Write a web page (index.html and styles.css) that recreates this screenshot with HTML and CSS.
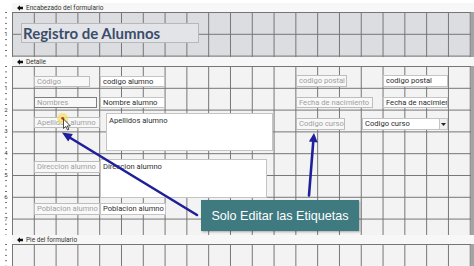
FILE: index.html
```html
<!DOCTYPE html>
<html lang="es">
<head>
<meta charset="utf-8">
<title>Registro de Alumnos - Vista Diseño</title>
<link rel="stylesheet" href="styles.css">
</head>
<body>
<div class="screen">
  <div class="topstrip"></div>

  <div class="bar-row">
    <div class="ruler ruler-plain"></div>
    <div class="bar">
      <svg class="bar-icon" width="6" height="6" viewBox="0 0 6 6"><polygon points="0,3 3,0.3 3,1.7 6,1.7 6,4.3 3,4.3 3,5.7" fill="#111"/></svg>
      <span>Encabezado del formulario</span>
    </div>
  </div>
  <div class="section sec-header">
    <div class="ruler">
      <div class="cm"><span>1</span></div>
    </div>
    <div class="grid grid-dark">
      <div class="title">Registro de Alumnos</div>
    </div>
    <div class="beyond"></div>
  </div>

  <div class="bar-row">
    <div class="ruler ruler-plain"></div>
    <div class="bar">
      <svg class="bar-icon" width="6" height="6" viewBox="0 0 6 6"><polygon points="0,3 3,0.3 3,1.7 6,1.7 6,4.3 3,4.3 3,5.7" fill="#111"/></svg>
      <span>Detalle</span>
    </div>
  </div>
  <div class="section sec-detail">
    <div class="ruler">
      <div class="cm"><span>1</span></div>
      <div class="cm"><span>2</span></div>
      <div class="cm"><span>3</span></div>
      <div class="cm"><span>4</span></div>
      <div class="cm"><span>5</span></div>
      <div class="cm"><span>6</span></div>
      <div class="cm"><span>7</span></div>
    </div>
    <div class="grid">
      <div class="ctl lbl l-codigo">Código</div>
      <div class="ctl txt t-codigo">codigo alumno</div>
      <div class="ctl lbl sel l-nombres">Nombres</div>
      <div class="ctl txt t-nombre">Nombre alumno</div>
      <div class="ctl lbl l-apellidos">Apellidos alumno</div>
      <div class="ctl txt multi t-apellidos">Apellidos alumno</div>
      <div class="ctl lbl l-direccion">Direccion alumno</div>
      <div class="ctl txt multi t-direccion">Direccion alumno</div>
      <div class="ctl lbl l-poblacion">Poblacion alumno</div>
      <div class="ctl txt t-poblacion">Poblacion alumno</div>
      <div class="ctl lbl l-postal">codigo postal</div>
      <div class="ctl txt t-postal">codigo postal</div>
      <div class="ctl lbl l-fecha">Fecha de nacimiento</div>
      <div class="ctl txt t-fecha">Fecha de nacimier</div>
      <div class="ctl lbl l-curso">Codigo curso</div>
      <div class="ctl txt combo t-curso">
        <span class="combo-text">Codigo curso</span>
        <span class="combo-btn"><svg width="5" height="3" viewBox="0 0 5 3"><polygon points="0,0 5,0 2.5,3" fill="#222"/></svg></span>
      </div>
      <div class="callout">Solo Editar las Etiquetas</div>
    </div>
    <div class="beyond"></div>
  </div>

  <div class="bar-row">
    <div class="ruler ruler-plain"></div>
    <div class="bar">
      <svg class="bar-icon" width="6" height="6" viewBox="0 0 6 6"><polygon points="0,3 3,0.3 3,1.7 6,1.7 6,4.3 3,4.3 3,5.7" fill="#111"/></svg>
      <span>Pie del formulario</span>
    </div>
  </div>
  <div class="section sec-footer">
    <div class="ruler"></div>
    <div class="grid"></div>
    <div class="beyond"></div>
  </div>
</div>

<svg class="overlay" width="474" height="266" viewBox="0 0 474 266">
  <line x1="197" y1="215" x2="68" y2="136.5" stroke="#1f1f9c" stroke-width="2.6" stroke-linecap="round"/>
  <polygon points="62,132.5 72.9,133.9 68.2,141.5" fill="#1f1f9c"/>
  <line x1="309" y1="195.5" x2="313.3" y2="141" stroke="#1f1f9c" stroke-width="2.6" stroke-linecap="round"/>
  <polygon points="314,133 317.7,142.4 308.9,141.6" fill="#1f1f9c"/>
  <circle cx="62.7" cy="118.3" r="5.5" fill="#f3e36a" opacity="0.75"/>
  <circle cx="62.7" cy="118.3" r="1.4" fill="#d0302a"/>
  <path transform="translate(63.5,119)" d="M0 0 L0 9.5 L2.3 7.4 L4 11 L5.4 10.3 L3.8 6.9 L6.8 6.9 Z" fill="#fff" stroke="#222" stroke-width="0.8" stroke-linejoin="round"/>
</svg>
</body>
</html>
```

FILE: styles.css
```css
* { box-sizing: border-box; }

body {
  margin: 0;
  width: 474px;
  height: 266px;
  overflow: hidden;
  background: #fff;
  font-family: Roboto, "Open Sans", sans-serif;
  position: relative;
}

.screen {
  display: flex;
  flex-direction: column;
  width: 474px;
  height: 266px;
}

.topstrip {
  height: 3px;
  flex: none;
  background: #fff;
}

.bar-row {
  display: flex;
  height: 9px;
  flex: none;
}

.ruler {
  width: 12px;
  flex: none;
  background-color: #fff;
  background-image: linear-gradient(to bottom, #6a6a6a 1px, transparent 1px);
  background-size: 2px 5.45px;
  background-repeat: repeat-y;
  background-position: 5px 0;
  display: flex;
  flex-direction: column;
}

.ruler-plain {
  background-image: none;
}

.cm {
  height: 21.8px;
  flex: none;
  display: flex;
  align-items: flex-end;
  justify-content: center;
}

.cm span {
  font-size: 6px;
  line-height: 6px;
  margin-bottom: -3px;
  padding: 0 1px;
  background: #fff;
  color: #333;
  position: relative;
  z-index: 1;
}

.bar {
  flex: 1;
  background: #f7f7f7;
  display: flex;
  align-items: center;
  gap: 3px;
  padding-left: 5px;
  font-size: 6.5px;
  color: #333;
  white-space: nowrap;
}

.bar-icon {
  flex: none;
}

.section {
  display: flex;
  flex: none;
}

.sec-header { height: 45px; }
.sec-detail { height: 169px; }
.sec-footer { height: 22px; }

.grid {
  width: 459px;
  flex: none;
  position: relative;
  background-color: #f3f3f3;
  background-image:
    linear-gradient(to right, #757575 1px, transparent 1px),
    linear-gradient(to bottom, #757575 1px, transparent 1px);
  background-size: 21.8px 21.8px;
}

.grid-dark {
  background-color: #dcdde1;
}

.beyond {
  flex: 1;
  background: #a4a4a4;
}

/* Header title */
.title {
  position: absolute;
  left: 9px;
  top: 11px;
  width: 178px;
  height: 20px;
  border: 1px solid #b7b8bc;
  background: #e3e4e7;
  color: #3b4d6b;
  font-family: Lato, Roboto, sans-serif;
  font-weight: bold;
  font-size: 15px;
  line-height: 18px;
  padding-left: 1px;
  white-space: nowrap;
}

/* Form controls on the design canvas */
.ctl {
  position: absolute;
  height: 11px;
  font-size: 7.6px;
  line-height: 9px;
  padding: 0 1px 0 2px;
  white-space: nowrap;
  overflow: hidden;
}

.lbl {
  border: 1px solid #bdbdbd;
  background: #f8f8f8;
  color: #9f9f9f;
}

.lbl.sel {
  border-color: #7e7e7e;
}

.txt {
  border: 1px solid #c4c4c4;
  background: #fff;
  color: #2e2e2e;
}

.multi {
  padding-top: 2px;
}

.l-codigo    { left: 22px;  top: 10px;  width: 56px; }
.t-codigo    { left: 88px;  top: 10px;  width: 65px; }
.l-nombres   { left: 22px;  top: 31px;  width: 63px; }
.t-nombre    { left: 88px;  top: 31px;  width: 65px; }
.l-apellidos { left: 22px;  top: 51px;  width: 66px; }
.t-apellidos { left: 94px;  top: 47px;  width: 167px; height: 38px; }
.l-direccion { left: 22px;  top: 95px;  width: 66px; height: 12px; }
.t-direccion { left: 88px;  top: 93px;  width: 167px; height: 39px; }
.l-poblacion { left: 22px;  top: 137px; width: 66px; height: 12px; }
.t-poblacion { left: 88px;  top: 137px; width: 66px; height: 12px; }
.l-postal    { left: 284px; top: 9px;   width: 51px; height: 12px; }
.t-postal    { left: 371px; top: 9px;   width: 65px; height: 12px; }
.l-fecha     { left: 284px; top: 31px;  width: 77px; }
.t-fecha     { left: 371px; top: 31px;  width: 65px; }
.l-curso     { left: 284px; top: 52px;  width: 49px; height: 12px; }
.t-curso     { left: 350px; top: 52px;  width: 86px; height: 12px; }

.combo {
  display: flex;
  align-items: stretch;
  padding-right: 0;
}

.combo-text {
  flex: 1;
}

.combo-btn {
  width: 8px;
  flex: none;
  border-left: 1px solid #c4c4c4;
  background: #f0f0f0;
  display: flex;
  align-items: center;
  justify-content: center;
}

/* Annotation callout */
.callout {
  position: absolute;
  left: 189px;
  top: 134px;
  width: 158px;
  height: 31px;
  background: #3e7a80;
  color: #fff;
  font-family: "Liberation Sans", Arial, sans-serif;
  font-size: 12.6px;
  display: flex;
  align-items: center;
  justify-content: center;
  box-shadow: 1px 1px 2px rgba(0, 0, 0, 0.3);
  z-index: 2;
}

.overlay {
  position: absolute;
  left: 0;
  top: 0;
  pointer-events: none;
  z-index: 5;
}
```
